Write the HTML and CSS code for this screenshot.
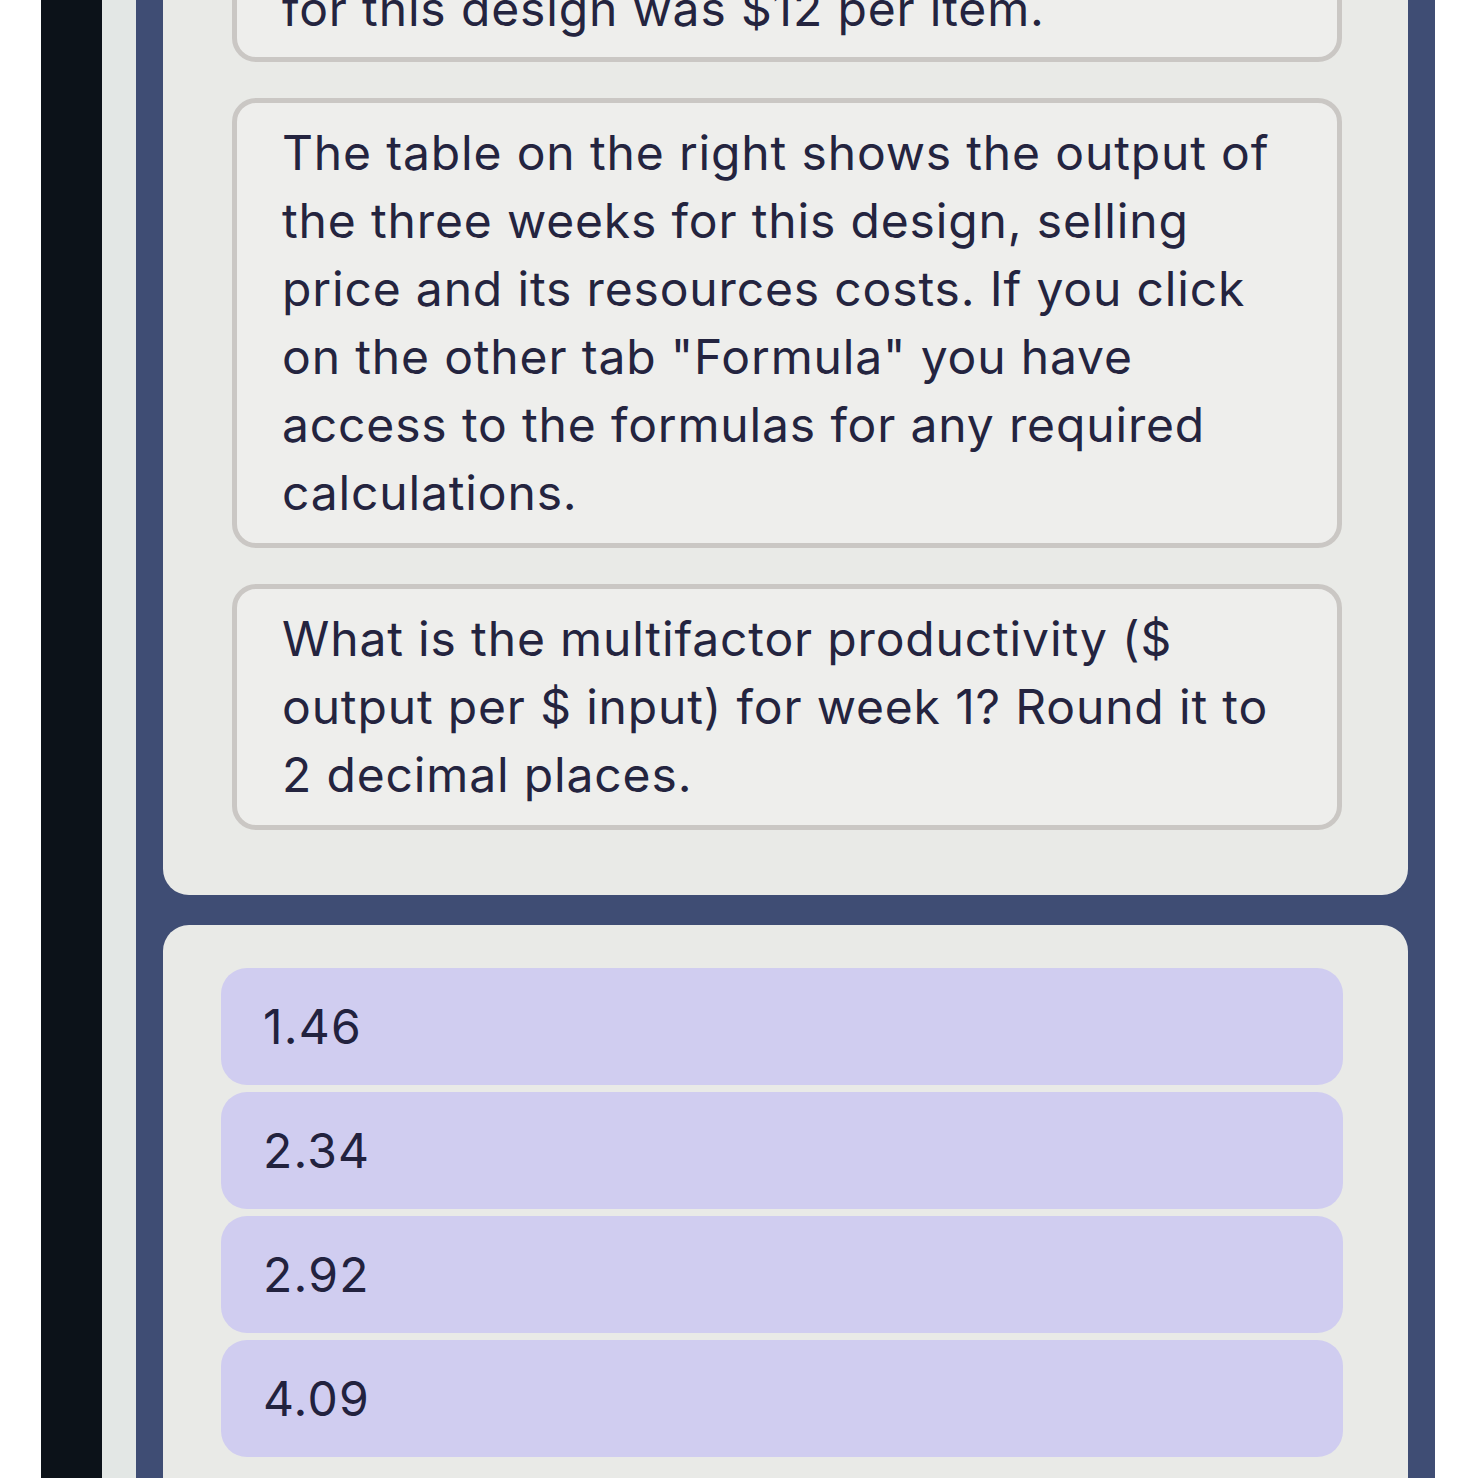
FILE: index.html
```html
<!DOCTYPE html>
<html lang="en">
<head>
<meta charset="utf-8">
<title>Question</title>
<link rel="stylesheet" href="styles.css">
</head>
<body>
<div class="device">
  <div class="bezel"></div>
  <div class="edge"></div>
  <main class="screen">
    <section class="card card-question">
      <div class="prompt prompt-cut">
        <p>for this design was $12 per item.</p>
      </div>
      <div class="prompt">
        <p>The table on the right shows the output of<br>the three weeks for this design, selling<br>price and its resources costs. If you click<br>on the other tab "Formula" you have<br>access to the formulas for any required<br>calculations.</p>
      </div>
      <div class="prompt">
        <p>What is the multifactor productivity ($<br>output per $ input) for week 1? Round it to<br>2 decimal places.</p>
      </div>
    </section>
    <section class="card card-answers">
      <div class="option">1.46</div>
      <div class="option">2.34</div>
      <div class="option">2.92</div>
      <div class="option">4.09</div>
    </section>
  </main>
</div>
</body>
</html>
```
FILE: styles.css
```css
html, body {
  margin: 0;
  padding: 0;
  background: #ffffff;
}
body {
  width: 1478px;
  height: 1478px;
  overflow: hidden;
  font-family: "Inter", "Open Sans", sans-serif;
  color: #24243f;
}
.device {
  display: flex;
  margin-left: 41px;
  width: 1394px;
  height: 1478px;
}
.bezel {
  width: 61px;
  flex: none;
  background: #0c1219;
}
.edge {
  width: 34px;
  flex: none;
  background: #e3e7e5;
}
.screen {
  flex: 1;
  background: #3f4d74;
  padding: 0 27px;
  display: flex;
  flex-direction: column;
  gap: 30px;
  overflow: hidden;
}
.card {
  background: #e9eae7;
  border-radius: 26px;
}
.card-question {
  margin-top: -76px;
  padding: 35px 66px 65px 69px;
  display: flex;
  flex-direction: column;
  gap: 36px;
}
.prompt {
  background: #eeeeec;
  border: 5px solid #cac7c4;
  border-radius: 24px;
  padding: 16px 45px 16px 45px;
}
.prompt-cut {
  padding-top: 11px;
  padding-bottom: 14px;
}
.prompt p {
  margin: 0;
  font-size: 48px;
  line-height: 68px;
  letter-spacing: 0.85px;
  white-space: nowrap;
}
.card-answers {
  padding: 43px 65px 60px 58px;
  display: flex;
  flex-direction: column;
  gap: 7px;
}
.option {
  height: 117px;
  background: #d0cdf0;
  border-radius: 26px;
  padding-left: 42px;
  display: flex;
  align-items: center;
  font-size: 48px;
  letter-spacing: 1.2px;
  color: #22223e;
}
```
